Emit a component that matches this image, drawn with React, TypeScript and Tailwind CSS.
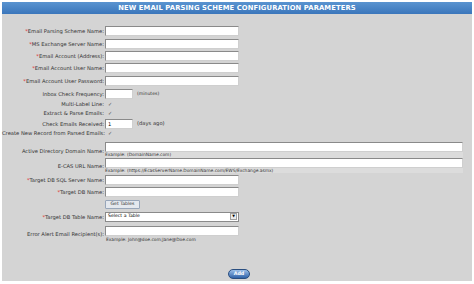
import React from "react";

const font = { fontFamily: '"DejaVu Sans", Verdana, sans-serif' };

function Label({ text, req, className = "" }: { text: string; req?: boolean; className?: string }) {
  return (
    <div className={`w-[102px] shrink-0 text-right whitespace-nowrap text-[5.2px] leading-[6px] text-[#333] ${className}`}>
      {req && <span className="text-[#e23030]">*</span>}
      {text}
    </div>
  );
}

function Input({ w = "w-[134px]", value = "" }: { w?: string; value?: string }) {
  return (
    <div className={`${w} h-[10px] bg-white border border-t-[#8a8a8a] border-l-[#8a8a8a] border-r-[#cfcfcf] border-b-[#cfcfcf] text-[5.2px] leading-[8px] pl-[2px] text-black`}>
      {value}
    </div>
  );
}

function Row({ label, req, h, children }: { label: string; req?: boolean; h: string; children?: React.ReactNode }) {
  return (
    <div className={`flex items-center shrink-0 ${h}`}>
      <Label text={label} req={req} />
      <div className="ml-[1px] flex items-center">{children}</div>
    </div>
  );
}

function Check() {
  return <span className="ml-[3px] text-[5px] leading-[6px] text-[#555]">✓</span>;
}

export default function App() {
  return (
    <div className="w-[474px] h-[284px] bg-white pt-[2px] pl-[2px]" style={font}>
      <div className="w-[470px] h-[279px] bg-[#d4d4d4] flex flex-col">
        <div className="h-[12px] shrink-0 bg-gradient-to-b from-[#5a94d0] to-[#3a76bb] flex items-center justify-center text-white font-bold text-[6.8px] tracking-[0.1px]">
          NEW EMAIL PARSING SCHEME CONFIGURATION PARAMETERS
        </div>
        <div className="h-[11px] shrink-0" />
        <Row label="Email Parsing Scheme Name:" req h="h-[12.4px]"><Input /></Row>
        <Row label="MS Exchange Server Name:" req h="h-[12.4px]"><Input /></Row>
        <Row label="Email Account (Address):" req h="h-[12.4px]"><Input /></Row>
        <Row label="Email Account User Name:" req h="h-[12.4px]"><Input /></Row>
        <Row label="Email Account User Password:" req h="h-[12.4px]"><Input /></Row>
        <div className="h-[1.5px] shrink-0" />
        <Row label="Inbox Check Frequency:" h="h-[11px]">
          <Input w="w-[28px]" />
          <span className="ml-[4px] text-[4.6px] text-[#333]">(minutes)</span>
        </Row>
        <Row label="Multi-Label Line:" h="h-[9px]"><Check /></Row>
        <Row label="Extract & Parse Emails:" h="h-[9.5px]"><Check /></Row>
        <Row label="Check Emails Received:" h="h-[11.5px]">
          <Input w="w-[28px]" value="1" />
          <span className="ml-[4px] text-[5.2px] text-[#333]">(days ago)</span>
        </Row>
        <Row label="Create New Record from Parsed Emails:" h="h-[7.5px]"><Check /></Row>
        <div className="h-[5.3px] shrink-0" />
        <div className="flex shrink-0">
          <Label text="Active Directory Domain Name:" className="pt-[5.4px]" />
          <div className="ml-[1px] flex flex-col">
            <Input w="w-[358px]" />
            <div className="h-[5.5px] text-[4.4px] leading-[5.5px] text-[#333] bg-[#dcdcdc] w-[358px]">Example: (DomainName.com)</div>
          </div>
        </div>
        <div className="h-[0.5px] shrink-0" />
        <div className="flex shrink-0">
          <Label text="E-CAS URL Name:" className="pt-[4.4px]" />
          <div className="ml-[1px] flex flex-col">
            <Input w="w-[358px]" />
            <div className="h-[5px] text-[4.4px] leading-[5px] text-[#333] bg-[#dcdcdc] w-[358px]">Example: (https://EcasServerName.DomainName.com/EWS/Exchange.asmx)</div>
          </div>
        </div>
        <Row label="Target DB SQL Server Name:" req h="h-[12.7px]"><Input /></Row>
        <Row label="Target DB Name:" req h="h-[12.7px]"><Input /></Row>
        <div className="flex h-[12px] shrink-0 items-center">
          <div className="w-[103px]" />
          <div className="h-[9px] w-[35px] bg-[#e4e8ee] border border-[#98a6ba] rounded-[1px] flex items-center justify-center text-[4.6px] text-[#333]">Get Tables</div>
        </div>
        <Row label="Target DB Table Name:" req h="h-[12.6px]">
          <div className="w-[134px] h-[10px] bg-white border border-[#8a8a8a] flex items-center justify-between">
            <span className="pl-[2px] text-[4.6px] text-black">Select a Table</span>
            <span className="mr-[1px] w-[7px] h-[7px] bg-[#ececec] border border-[#a0a0a0] flex items-center justify-center text-[3.5px] text-black">▼</span>
          </div>
        </Row>
        <div className="h-[2.4px] shrink-0" />
        <div className="flex shrink-0">
          <Label text="Error Alert Email Recipient(s):" className="pt-[5.3px]" />
          <div className="ml-[1px] flex flex-col">
            <Input />
            <div className="pt-[1px] text-[4.4px] leading-[6px] text-[#333] pl-[1px]">Example: John@doe.com;Jane@Doe.com</div>
          </div>
        </div>
        <div className="flex justify-center mt-[26px] pl-[4px]">
          <div className="w-[22px] h-[10px] rounded-full bg-gradient-to-b from-[#9cc0ea] to-[#2f62a8] border border-[#2a4e80] flex items-center justify-center text-white font-bold text-[4.8px]">
            Add
          </div>
        </div>
      </div>
    </div>
  );
}
